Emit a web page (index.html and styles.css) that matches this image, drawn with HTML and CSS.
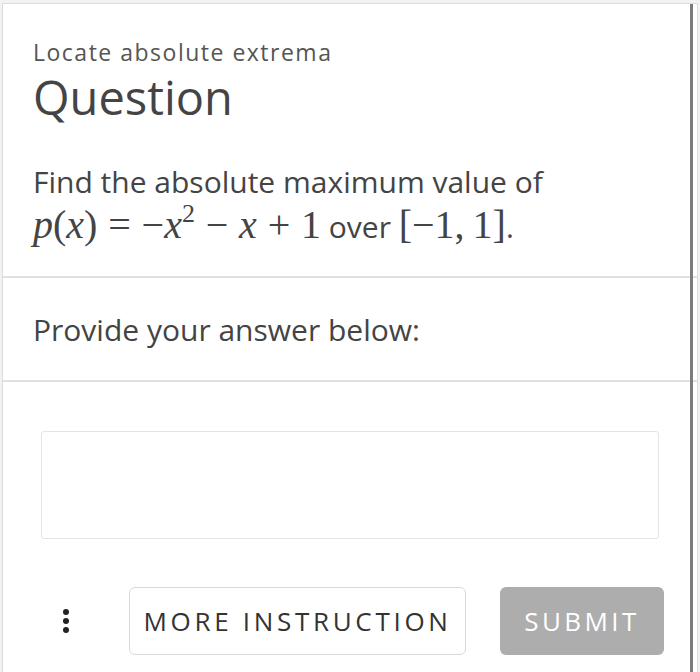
FILE: index.html
```html
<!DOCTYPE html>
<html lang="en">
<head>
  <meta charset="UTF-8">
  <meta name="viewport" content="width=device-width, initial-scale=1.0">
  <title>Locate absolute extrema</title>
  <link rel="stylesheet" href="styles.css">
</head>
<body>
  <div class="question-card">
    <!-- Header and prompt -->
    <div class="card-section question-head">
      <div class="topic">Locate absolute extrema</div>
      <h1>Question</h1>
      <p class="prompt">
        Find the absolute maximum value of<br>
        <span class="math"><i>p</i>(<i>x</i>)<span class="op">=</span>−<i>x</i><sup>2</sup><span class="op">−</span><i>x</i><span class="op">+</span>1</span> over <span class="math">[−1,<span class="sp"></span>1]</span>.
      </p>
    </div>

    <div class="card-section answer-label">
      Provide your answer below:
    </div>

    <!-- Answer input and actions -->
    <div class="card-section answer-area">
      <div class="answer-box" contenteditable="true"></div>
      <div class="actions">
        <button type="button" class="menu-btn" aria-label="More">
          <span></span><span></span><span></span>
        </button>
        <button type="button" class="more-btn">MORE INSTRUCTION</button>
        <button type="button" class="submit-btn" disabled>SUBMIT</button>
      </div>
    </div>

    <div class="scroll-thumb"></div>
  </div>
</body>
</html>
```

FILE: styles.css
```css
body {
  font-family: "Open Sans", Arial, sans-serif;
  margin: 0;
  background-color: #f2f2f2;
  color: #444;
}

.question-card {
  position: relative;
  margin: 3px 2px 0 2px;
  height: 669px;
  background: #fff;
  border: 1px solid #dcdcdc;
  border-bottom: none;
  box-sizing: border-box;
  overflow: hidden;
}

.card-section {
  border-bottom: 2px solid #e0e0e0;
  padding: 0 30px;
}

.question-head {
  padding-top: 33px;
  height: 274px;
  box-sizing: border-box;
}

.topic {
  font-size: 23px;
  letter-spacing: 1.5px;
  color: #555;
  line-height: 30px;
}

h1 {
  margin: 0;
  font-size: 47px;
  font-weight: 400;
  line-height: 60px;
  color: #444;
}

.prompt {
  margin: 32px 0 0;
  font-size: 30px;
  line-height: 45px;
  color: #444;
}

.math {
  font-family: "Liberation Serif", "DejaVu Serif", serif;
  font-size: 40px;
  line-height: 1;
}

.math .op {
  margin: 0 0.27em;
}

.math .sp {
  display: inline-block;
  width: 0.2em;
}

.math sup {
  font-size: 26px;
  line-height: 0;
  vertical-align: 0.6em;
}

.answer-label {
  height: 104px;
  box-sizing: border-box;
  display: flex;
  align-items: center;
  font-size: 30px;
  color: #444;
}

.answer-area {
  border-bottom: none;
  padding: 49px 38px 0 38px;
}

.answer-box {
  height: 106px;
  border: 1px solid #e4e4e4;
  border-radius: 3px;
}

.actions {
  display: flex;
  align-items: center;
  margin: 48px -8px 0 0;
  padding-left: 22px;
}

.menu-btn {
  display: flex;
  flex-direction: column;
  gap: 3px;
  padding: 0;
  border: none;
  background: none;
  width: 10px;
}

.menu-btn span {
  width: 6px;
  height: 6px;
  border-radius: 50%;
  background: #222;
}

.more-btn {
  flex-shrink: 0;
  margin-left: 56px;
  width: 337px;
  height: 68px;
  border: 1px solid #d9d9d9;
  border-radius: 6px;
  background: #fff;
  font-family: inherit;
  font-size: 26px;
  letter-spacing: 3.7px;
  color: #333;
}

.submit-btn {
  flex-shrink: 0;
  margin-left: 34px;
  width: 164px;
  height: 68px;
  border: none;
  border-radius: 6px;
  background: #adadad;
  font-family: inherit;
  font-size: 26px;
  letter-spacing: 3.4px;
  color: #fff;
}

.scroll-thumb {
  position: absolute;
  top: -4px;
  bottom: 0;
  right: 4px;
  width: 3px;
  background: #7b7b7b;
}
```
